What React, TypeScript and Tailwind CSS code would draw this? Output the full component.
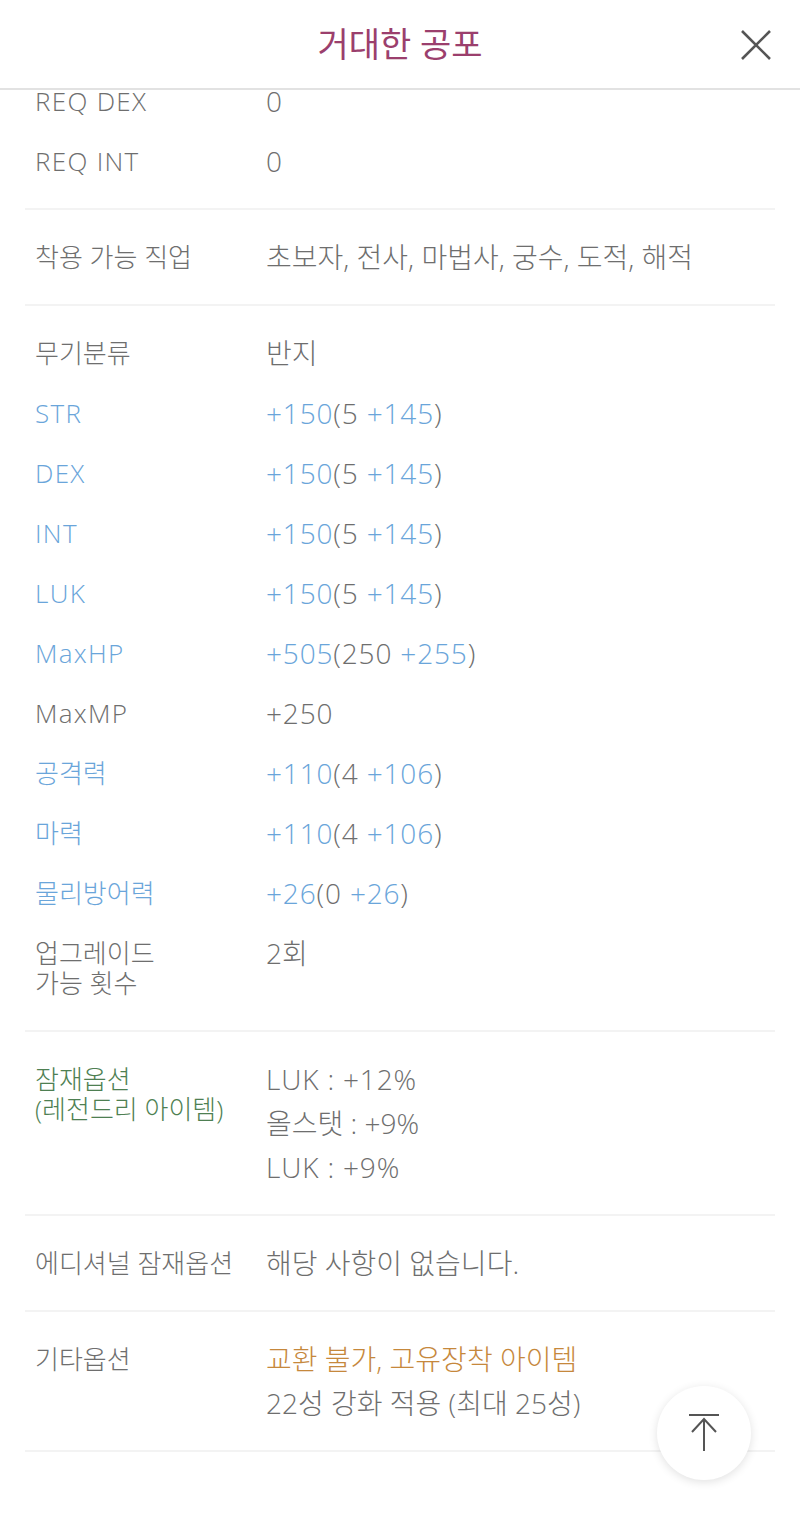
const FONT = { fontFamily: '"Open Sans", "Noto Sans CJK KR", sans-serif' };

const blue = "text-[#6aa5da]";
const latinLabel = "tracking-[0.05em]";
const latinValue = "tracking-[0.03em]";

type Part = { t: string; c?: string };

const StatValue = ({ parts }: { parts: Part[] }) => (
  <span className={latinValue}>
    {parts.map((p, i) => (
      <span key={i} className={p.c ?? ""}>
        {p.t}
      </span>
    ))}
  </span>
);

const stat = (total: string, base: string, bonus: string): Part[] => [
  { t: total, c: blue },
  { t: `(${base} ` },
  { t: bonus, c: blue },
  { t: ")" },
];

type Row = { label: React.ReactNode; value: React.ReactNode; labelClass?: string };

const Section = ({ rows, first }: { rows: Row[]; first?: boolean }) => (
  <div
    className={
      "flex flex-col gap-[30px] border-b-2 border-[#f3f3f3] pl-[10px] pb-[32px] " +
      (first ? "-mt-[4px]" : "pt-[32px]")
    }
  >
    {rows.map((r, i) => (
      <div key={i} className="flex leading-[30px]">
        <div className={"w-[231px] shrink-0 text-[26px] " + (r.labelClass ?? "")}>{r.label}</div>
        <div className="flex-1 text-[28px]">{r.value}</div>
      </div>
    ))}
  </div>
);

export default function App() {
  return (
    <div className="relative min-h-[1519px] bg-white font-light text-[#6e6e6e]" style={FONT}>
      <header className="relative z-10 flex h-[90px] items-center justify-center border-b-2 border-[#e2e2e2] bg-white">
        <h1 className="text-[34px] font-normal text-[#9b3f6d]">거대한 공포</h1>
        <button className="absolute right-[29px] top-[30px]">
          <svg width="30" height="30" viewBox="0 0 30 30">
            <path d="M1 1 L29 29 M29 1 L1 29" stroke="#555" strokeWidth="2.6" fill="none" />
          </svg>
        </button>
      </header>

      <main className="mx-[25px]">
        <Section
          first
          rows={[
            { label: "REQ DEX", labelClass: latinLabel, value: "0" },
            { label: "REQ INT", labelClass: latinLabel, value: "0" },
          ]}
        />
        <Section rows={[{ label: "착용 가능 직업", value: "초보자, 전사, 마법사, 궁수, 도적, 해적" }]} />
        <Section
          rows={[
            { label: "무기분류", value: "반지" },
            { label: "STR", labelClass: `${blue} ${latinLabel}`, value: <StatValue parts={stat("+150", "5", "+145")} /> },
            { label: "DEX", labelClass: `${blue} ${latinLabel}`, value: <StatValue parts={stat("+150", "5", "+145")} /> },
            { label: "INT", labelClass: `${blue} ${latinLabel}`, value: <StatValue parts={stat("+150", "5", "+145")} /> },
            { label: "LUK", labelClass: `${blue} ${latinLabel}`, value: <StatValue parts={stat("+150", "5", "+145")} /> },
            { label: "MaxHP", labelClass: `${blue} ${latinLabel}`, value: <StatValue parts={stat("+505", "250", "+255")} /> },
            { label: "MaxMP", labelClass: latinLabel, value: <span className={latinValue}>+250</span> },
            { label: "공격력", labelClass: blue, value: <StatValue parts={stat("+110", "4", "+106")} /> },
            { label: "마력", labelClass: blue, value: <StatValue parts={stat("+110", "4", "+106")} /> },
            { label: "물리방어력", labelClass: blue, value: <StatValue parts={stat("+26", "0", "+26")} /> },
            {
              label: (
                <>
                  업그레이드
                  <br />
                  가능 횟수
                </>
              ),
              value: "2회",
            },
          ]}
        />
        <Section
          rows={[
            {
              label: (
                <>
                  잠재옵션
                  <br />
                  (레전드리 아이템)
                </>
              ),
              labelClass: "text-[#4e7f52]",
              value: (
                <div className="flex flex-col gap-[14px]">
                  <div className={latinValue}>LUK : +12%</div>
                  <div>올스탯 : +9%</div>
                  <div className={latinValue}>LUK : +9%</div>
                </div>
              ),
            },
          ]}
        />
        <Section rows={[{ label: "에디셔널 잠재옵션", value: "해당 사항이 없습니다." }]} />
        <Section
          rows={[
            {
              label: "기타옵션",
              value: (
                <div className="flex flex-col gap-[14px]">
                  <div className="text-[#c6883c]">교환 불가, 고유장착 아이템</div>
                  <div>22성 강화 적용 (최대 25성)</div>
                </div>
              ),
            },
          ]}
        />
      </main>

      <button className="fixed bottom-[39px] right-[49px] flex h-[94px] w-[94px] items-center justify-center rounded-full bg-white shadow-[0_2px_10px_rgba(0,0,0,0.12)]">
        <svg width="34" height="40" viewBox="0 0 34 40">
          <path
            d="M2 2 H32 M17 38 V6 M5 19 L17 6 L29 19"
            stroke="#555"
            strokeWidth="2"
            fill="none"
            strokeLinejoin="miter"
          />
        </svg>
      </button>
    </div>
  );
}
